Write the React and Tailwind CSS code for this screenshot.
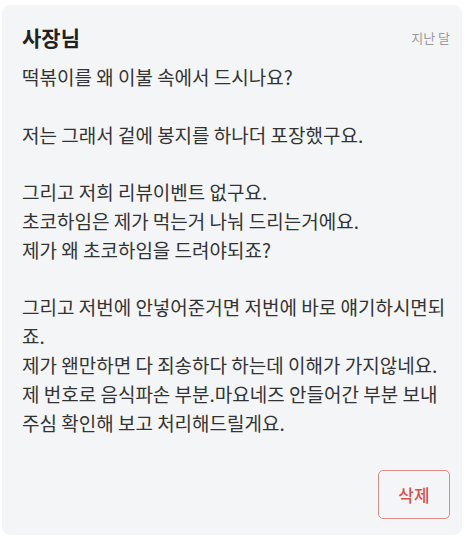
import React from 'react';

const lines = [
  '떡볶이를 왜 이불 속에서 드시나요?',
  '',
  '저는 그래서 겉에 봉지를 하나더 포장했구요.',
  '',
  '그리고 저희 리뷰이벤트 없구요.',
  '초코하임은 제가 먹는거 나눠 드리는거에요.',
  '제가 왜 초코하임을 드려야되죠?',
  '',
  '그리고 저번에 안넣어준거면 저번에 바로 얘기하시면되',
  '죠.',
  '제가 왠만하면 다 죄송하다 하는데 이해가 가지않네요.',
  '제 번호로 음식파손 부분.마요네즈 안들어간 부분 보내',
  '주심 확인해 보고 처리해드릴게요.',
];

export default function App() {
  return (
    <div className="w-[475px] h-[542px] bg-white pt-[5px] pl-[2px] font-['Noto_Sans_CJK_KR','Noto_Sans',sans-serif]">
      <div className="w-[460px] h-[530px] bg-[#f4f5f7] rounded-lg pl-5 pr-3 pt-[19px] flex flex-col">
        {/* Header */}
        <div className="flex items-center justify-between h-7">
          <span className="text-[21px] font-bold text-[#222]">사장님</span>
          <span className="text-[13px] text-[#9a9a9a]">지난 달</span>
        </div>

        {/* Reply body */}
        <div className="mt-[11px] text-[19px] leading-[28.8px] text-[#333]">
          {lines.map((line, i) => (
            <div key={i} className="whitespace-nowrap h-[28.8px]">
              {line}
            </div>
          ))}
        </div>

        <div className="flex justify-end mt-[33px]">
          <button className="w-[72px] h-[49px] rounded-[5px] border border-[#e08a87] text-[17px] font-medium text-[#d9534f]">
            삭제
          </button>
        </div>
      </div>
    </div>
  );
}
